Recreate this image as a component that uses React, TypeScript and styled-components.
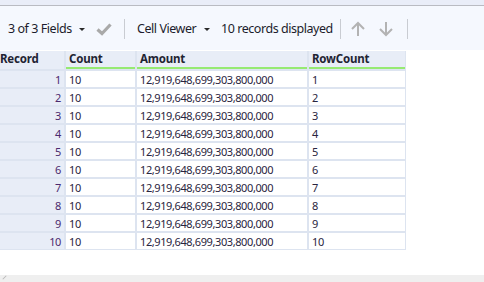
import styled, { createGlobalStyle } from "styled-components";

const GlobalStyle = createGlobalStyle`
   html, body {
      margin: 0;
      padding: 0;
      background: #ffffff;
      overflow: hidden;
   }
`;

const Page = styled.div`
   width: 484px;
   height: 282px;
   display: flex;
   flex-direction: column;
   font-family: "Noto Sans", "Open Sans", sans-serif;
   color: #1e1e2e;
   background: #ffffff;
`;

const TopBand = styled.div`
   height: 5px;
   background: #e9edf8;
   border-bottom: 1px solid #b9bbc2;
`;

const Toolbar = styled.div`
   height: 44px;
   display: flex;
   align-items: center;
   padding-left: 8px;
   padding-top: 1px;
   box-sizing: border-box;
   background: #f5f8fe;
   font-size: 12.5px;
   letter-spacing: -0.45px;
   color: #1c1c2c;
`;

const ToolText = styled.span<{ $w: number }>`
   white-space: nowrap;
   width: ${(p) => p.$w}px;
`;

const Caret = styled.span`
   width: 0;
   height: 0;
   border-left: 3px solid transparent;
   border-right: 3px solid transparent;
   border-top: 3px solid #2a2a2a;
   margin: 1px 11px 0 9px;
`;

const Separator = styled.div<{ $l: number; $r: number }>`
   width: 1px;
   height: 20px;
   background: #c9ccd2;
   margin: 0 ${(p) => p.$r}px 0 ${(p) => p.$l}px;
`;

const IconBox = styled.div<{ $gap?: number }>`
   display: flex;
   align-items: center;
   justify-content: center;
   width: 16px;
   height: 16px;
   margin-right: ${(p) => p.$gap ?? 0}px;
`;

const Body = styled.div`
   flex: 1;
   padding-top: 1px;
`;

const Grid = styled.div`
   display: grid;
   grid-template-columns: 64px 69px 170px 96px;
   column-gap: 2px;
   row-gap: 2px;
   width: 405px;
   background: #dde4f0;
   padding-bottom: 1px;
   padding-right: 1px;
   font-size: 11px;
   letter-spacing: -0.4px;
`;

const HeadCell = styled.div<{ $marked?: boolean; $flush?: boolean }>`
   height: 16px;
   line-height: 16px;
   background: #e8edf7;
   font-weight: 700;
   font-size: 11.5px;
   letter-spacing: -0.2px;
   color: #1f2433;
   padding-left: ${(p) => (p.$flush ? "0" : "3px")};
   border-bottom: 2px solid ${(p) => (p.$marked ? "#96ea72" : "#e8edf7")};
   white-space: nowrap;
   overflow: hidden;
`;

const RecordCell = styled.div`
   height: 16px;
   line-height: 17px;
   background: #e8edf7;
   text-align: right;
   padding-right: 3px;
   color: #4b2a6e;
`;

const DataCell = styled.div`
   height: 16px;
   line-height: 17px;
   background: #ffffff;
   padding-left: 3px;
   color: #2a2540;
   white-space: nowrap;
   overflow: hidden;
`;

const Footer = styled.div`
   height: 7px;
   background: #efefef;
   position: relative;
`;

const Grip = styled.div`
   position: absolute;
   left: 2px;
   top: 2px;
   width: 5px;
   height: 1px;
   background: #b8b8b8;
   transform: rotate(-45deg);
`;

const CheckIcon = () => (
   <svg width="16" height="14" viewBox="0 0 16 14">
      <path d="M1.5 7.5 L6 11.5 L14.5 2.5" fill="none" stroke="#a9a9a9" strokeWidth="3.2" />
   </svg>
);

const ArrowIcon = ({ down }: { down?: boolean }) => (
   <svg width="16" height="16" viewBox="0 0 16 16" style={down ? { transform: "rotate(180deg)" } : undefined}>
      <path d="M8 15 V2 M2 8 L8 2 L14 8" fill="none" stroke="#b3b3b3" strokeWidth="2" />
   </svg>
);

const rows = Array.from({ length: 10 }, (_, i) => i + 1);

export default function App() {
   return (
      <Page>
         <GlobalStyle />
         <TopBand />
         <Toolbar>
            <ToolText $w={62}>3 of 3 Fields</ToolText>
            <Caret />
            <IconBox>
               <CheckIcon />
            </IconBox>
            <Separator $l={12} $r={12} />
            <ToolText $w={58}>Cell Viewer</ToolText>
            <Caret />
            <ToolText $w={106}>10 records displayed</ToolText>
            <Separator $l={13} $r={9} />
            <IconBox $gap={12}>
               <ArrowIcon />
            </IconBox>
            <IconBox>
               <ArrowIcon down />
            </IconBox>
            <Separator $l={13} $r={0} />
         </Toolbar>
         <Body>
            <Grid>
               <HeadCell $flush>Record</HeadCell>
               <HeadCell $marked>Count</HeadCell>
               <HeadCell $marked>Amount</HeadCell>
               <HeadCell $marked>RowCount</HeadCell>
               {rows.map((n) => (
                  <>
                     <RecordCell key={`r${n}`}>{n}</RecordCell>
                     <DataCell key={`c${n}`}>10</DataCell>
                     <DataCell key={`a${n}`}>12,919,648,699,303,800,000</DataCell>
                     <DataCell key={`n${n}`}>{n}</DataCell>
                  </>
               ))}
            </Grid>
         </Body>
         <Footer>
            <Grip />
         </Footer>
      </Page>
   );
}
